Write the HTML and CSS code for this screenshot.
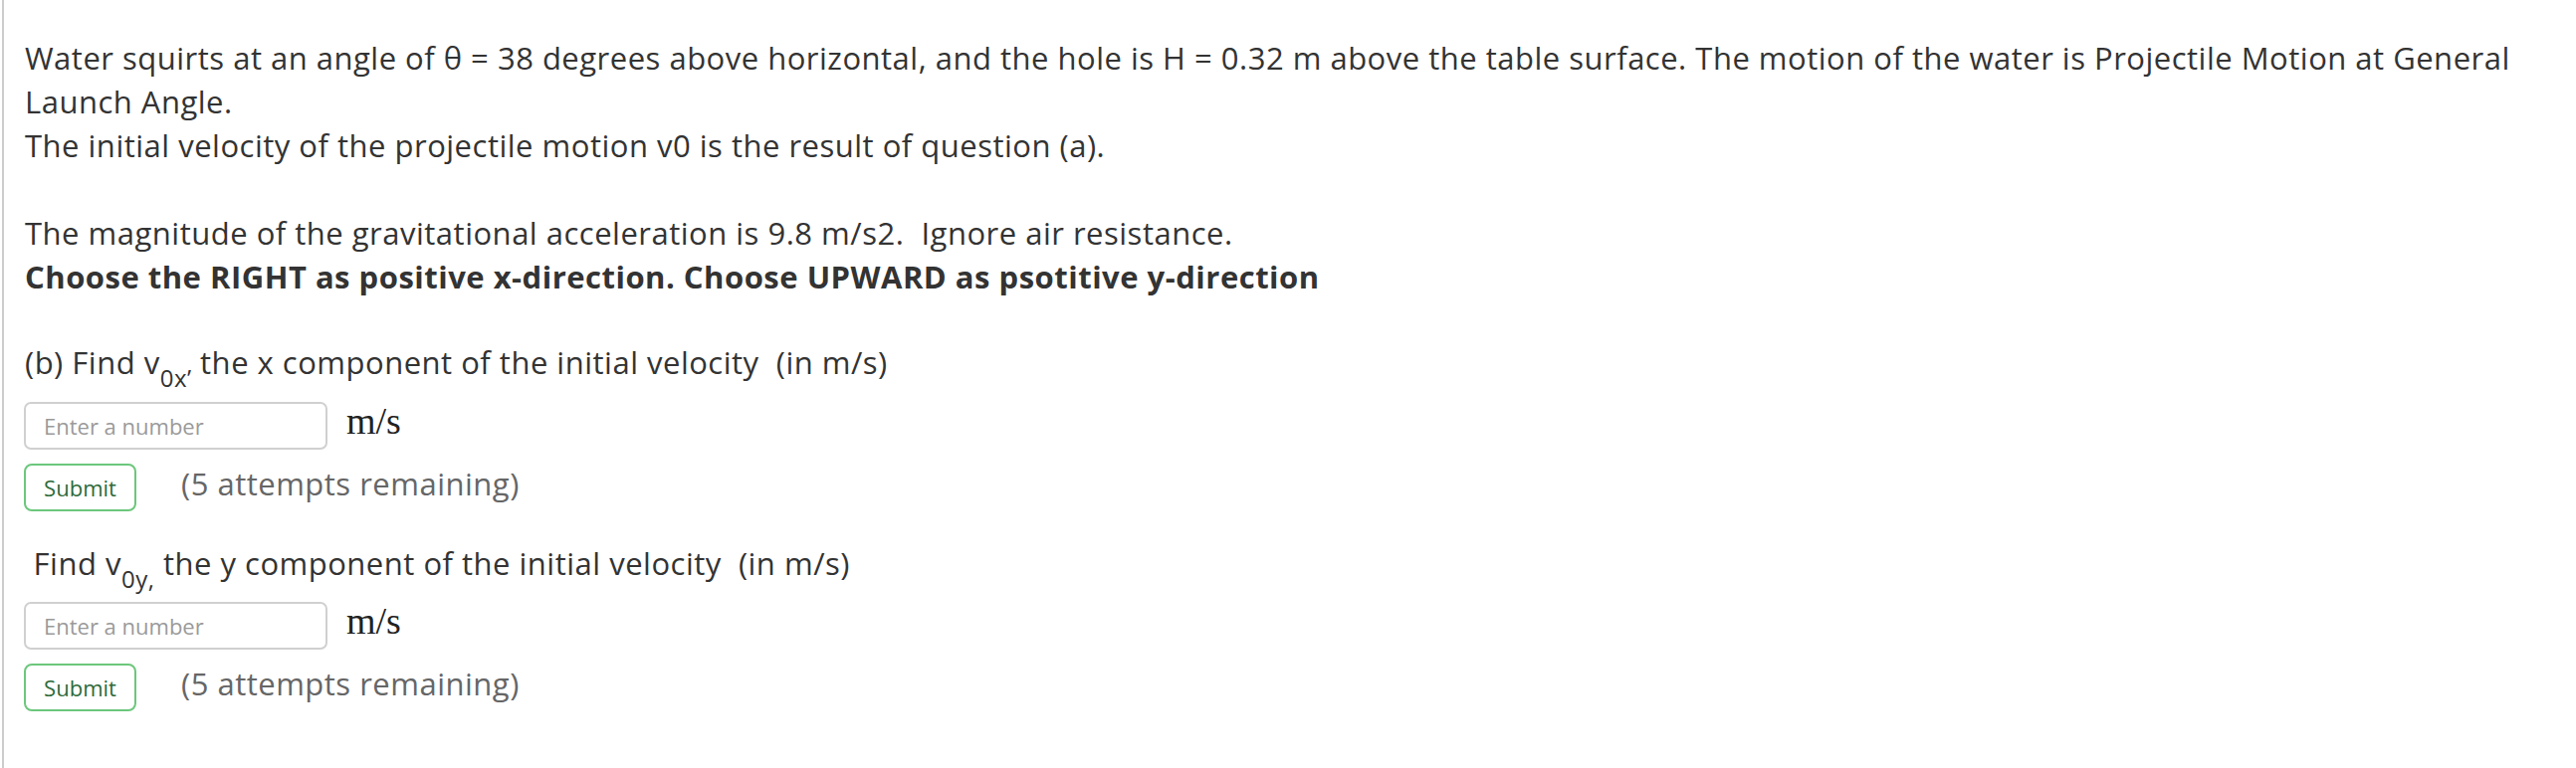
FILE: index.html
```html
<!DOCTYPE html>
<html>
<head>
<meta charset="utf-8">
<link rel="stylesheet" href="styles.css">
</head>
<body>
<div class="panel">
  <div class="content">
    <p class="intro">Water squirts at an angle of θ = 38 degrees above horizontal, and the hole is H = 0.32 m above the table surface. The motion of the water is Projectile Motion at General Launch Angle.<br>The initial velocity of the projectile motion v0 is the result of question (a).<br><br>The magnitude of the gravitational acceleration is 9.8 m/s2.&nbsp; Ignore air resistance.<br><strong>Choose the RIGHT as positive x-direction. Choose UPWARD as psotitive y-direction</strong></p>

    <div class="question first">
      <div class="label">(b) Find v<sub>0x’</sub> the x component of the initial velocity &nbsp;(in m/s)</div>
      <div class="answer-row">
        <input class="num" type="text" placeholder="Enter a number">
        <span class="unit">m/s</span>
      </div>
      <div class="submit-row">
        <button class="submit">Submit</button>
        <span class="attempts">(5 attempts remaining)</span>
      </div>
    </div>

    <div class="question second">
      <div class="label">&nbsp;Find v<sub>0y,</sub> the y component of the initial velocity &nbsp;(in m/s)</div>
      <div class="answer-row">
        <input class="num" type="text" placeholder="Enter a number">
        <span class="unit">m/s</span>
      </div>
      <div class="submit-row">
        <button class="submit">Submit</button>
        <span class="attempts">(5 attempts remaining)</span>
      </div>
    </div>
  </div>
</div>
</body>
</html>
```

FILE: styles.css
```css
html, body {
  margin: 0;
  padding: 0;
  background: #ffffff;
}

body {
  font-family: "Open Sans", "DejaVu Sans", sans-serif;
  color: #333333;
  width: 2588px;
  height: 772px;
  overflow: hidden;
}

.panel {
  margin-left: 2px;
  border-left: 2px solid #cccccc;
  height: 772px;
  box-sizing: border-box;
  padding: 36px 0 0 21px;
}

.content {
  width: 2530px;
}

.intro {
  margin: 0;
  font-size: 31px;
  letter-spacing: 0.5px;
  line-height: 44px;
}

.intro strong {
  font-weight: 700;
  letter-spacing: 0.5px;
}

.question.first {
  margin-top: 42px;
}

.question.second {
  margin-top: 29px;
}

.question.second .answer-row {
  margin-top: 17px;
}

.label {
  font-size: 31px;
  letter-spacing: 0.5px;
  line-height: 44px;
}

.label sub {
  font-size: 24px;
  line-height: 0;
  vertical-align: -13px;
}

.answer-row {
  display: flex;
  align-items: center;
  gap: 19px;
  margin-top: 18px;
}

.num {
  width: 305px;
  height: 48px;
  box-sizing: border-box;
  margin: 0 0 0 -1px;
  border: 2px solid #d0d0d0;
  border-radius: 7px;
  padding: 0 0 0 18px;
  font-family: "Open Sans", "DejaVu Sans", sans-serif;
  font-size: 22px;
  color: #333333;
  background: #ffffff;
  outline: none;
}

.num::placeholder {
  color: #9a9a9a;
}

.unit {
  font-family: "Liberation Serif", "Times New Roman", serif;
  font-size: 38px;
  line-height: 38px;
  color: #222222;
  margin-bottom: 10px;
}

.submit-row {
  display: flex;
  align-items: center;
  gap: 45px;
  margin-top: 12px;
}

.submit {
  width: 113px;
  height: 48px;
  box-sizing: border-box;
  margin: 0 0 0 -1px;
  padding: 0;
  border: 2px solid #6cc77c;
  border-radius: 8px;
  background: #ffffff;
  font-family: "Open Sans", "DejaVu Sans", sans-serif;
  font-size: 22px;
  color: #2e6b3a;
  cursor: pointer;
}

.attempts {
  font-size: 31px;
  letter-spacing: 0.5px;
  line-height: 44px;
  color: #666666;
  margin-bottom: 7px;
}
```
